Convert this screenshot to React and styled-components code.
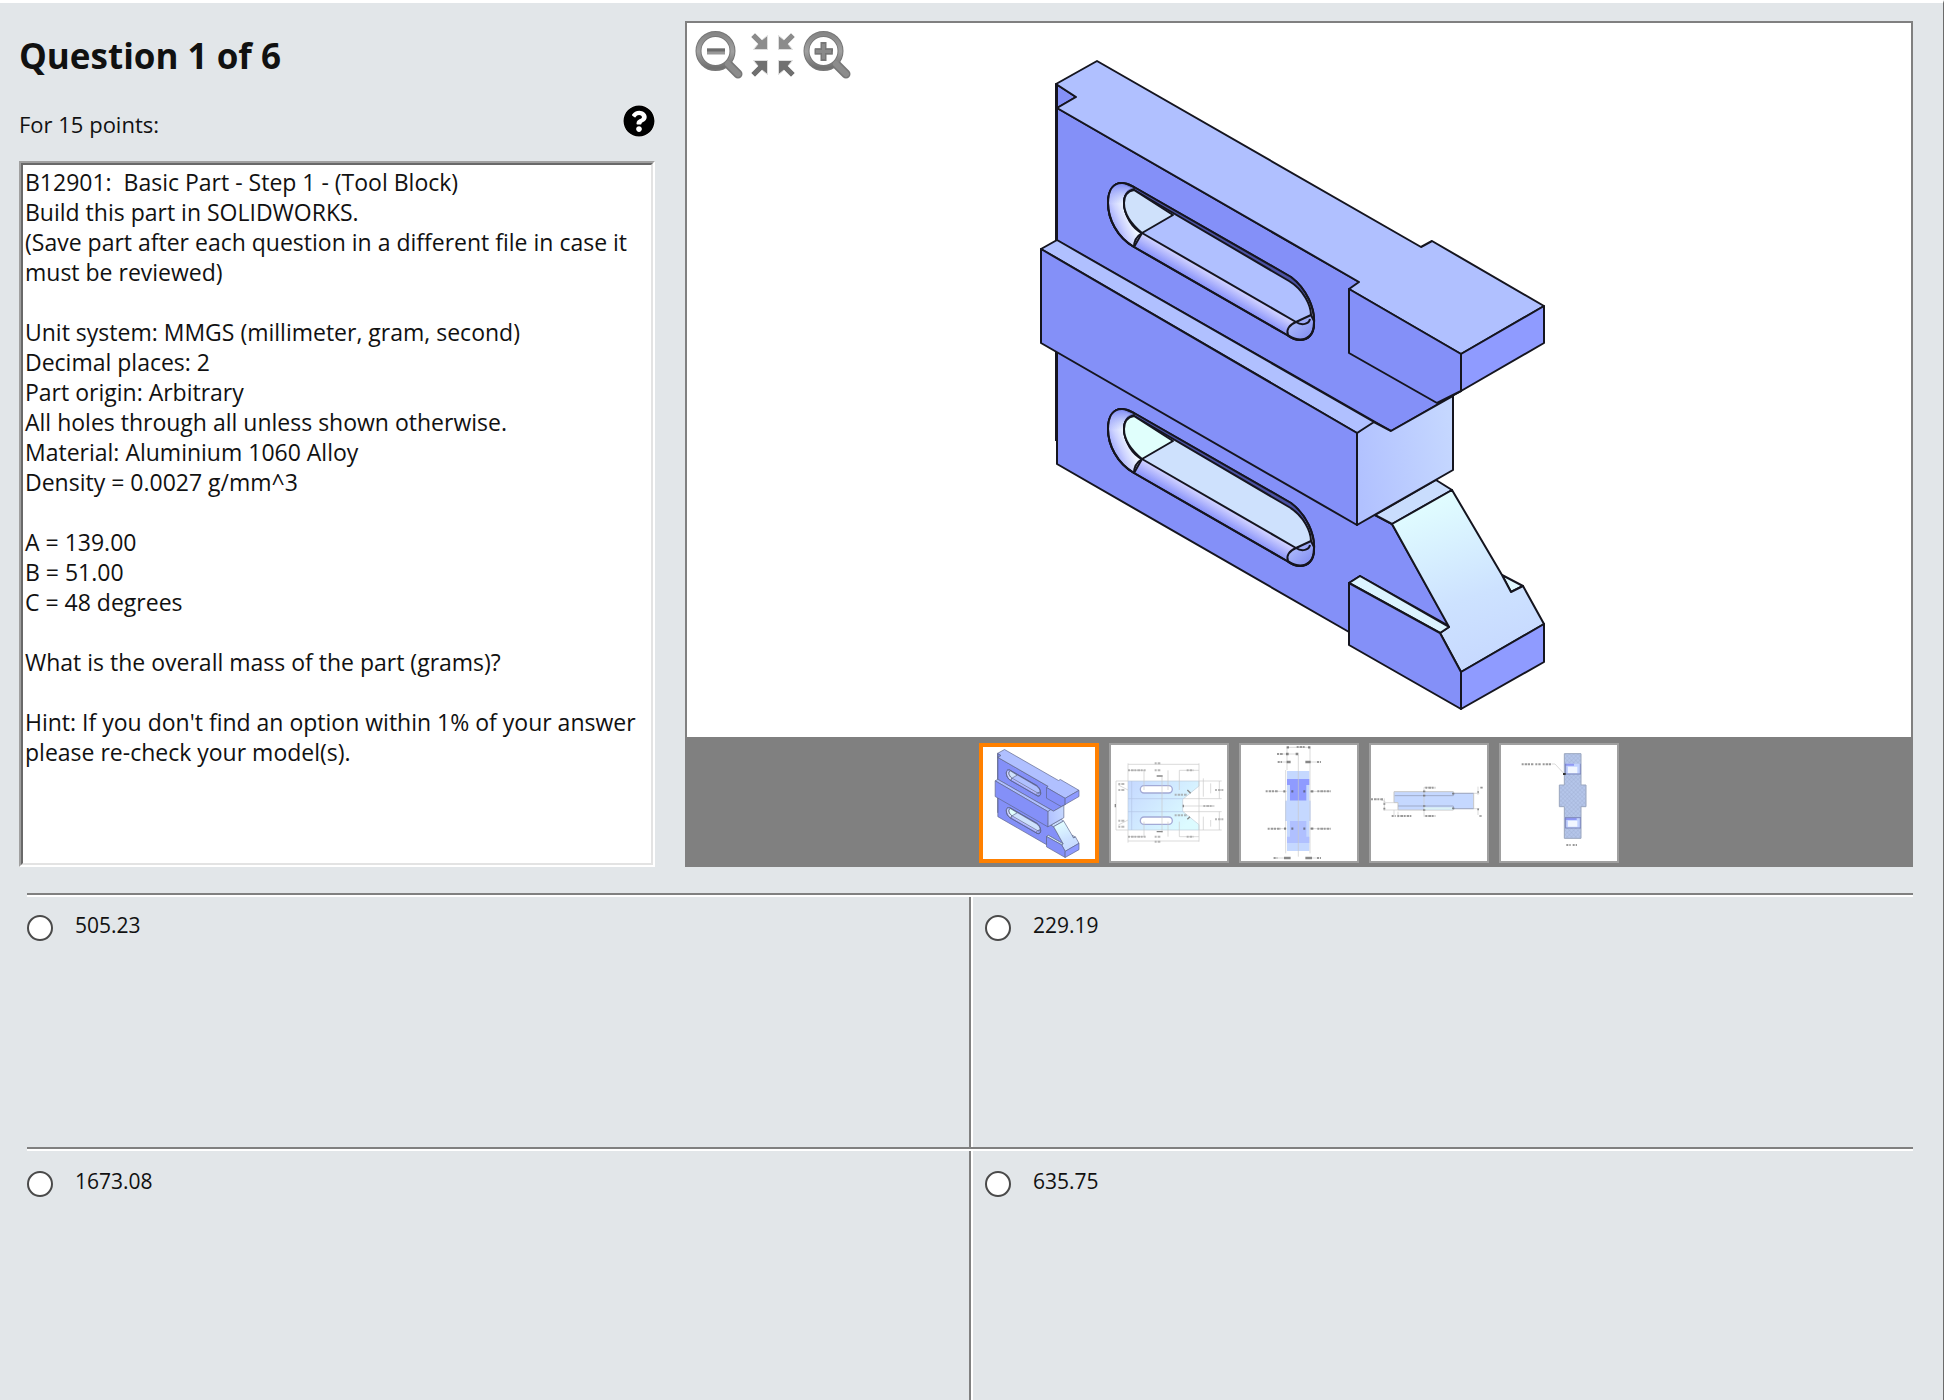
import React, { useState } from "react";
import styled, { createGlobalStyle } from "styled-components";
import { FaQuestionCircle } from "react-icons/fa";

const GlobalStyle = createGlobalStyle`
  *, *::before, *::after { box-sizing: border-box; }
  body {
    margin: 0;
    background: #e2e6e9;
    color: #111;
    font-family: "Open Sans", "Noto Sans", sans-serif;
    font-size: 23px;
    line-height: 30px;
  }
`;

const Page = styled.main`
  min-height: 100vh;
  display: flex;
  flex-direction: column;
  padding: 18px 30px 0 19px;
  border-top: 3px solid #fff;
  border-right: 1px solid #6b6b6b;
`;

const Question = styled.section`
  display: grid;
  grid-template-columns: 636px minmax(0, 1fr);
  gap: 30px;
`;

const Prompt = styled.div`
  display: flex;
  flex-direction: column;
  padding-top: 11px;
`;

const Title = styled.h1`
  margin: 0 0 25px;
  font-size: 35px;
  line-height: 48px;
  font-weight: 700;
`;

const PointsRow = styled.div`
  display: flex;
  justify-content: space-between;
  align-items: flex-end;
  height: 34px;
  margin-bottom: 22px;
  font-size: 22px;
`;

const HelpButton = styled.button`
  align-self: flex-start;
  width: 32px;
  height: 32px;
  padding: 0;
  border: 0;
  border-radius: 50%;
  background: #fff;
  color: #000;
  cursor: pointer;
  svg { display: block; width: 32px; height: 32px; }
`;

const PromptFrame = styled.div`
  flex: 1;
  display: flex;
  border: 2px solid;
  border-color: #a0a0a0 #fff #fff #a0a0a0;
`;

const PromptText = styled.textarea`
  flex: 1;
  margin: 0;
  padding: 2px 0 0 2px;
  border: 2px solid;
  border-color: #696969 #e3e3e3 #e3e3e3 #696969;
  border-radius: 0;
  outline: 0;
  resize: none;
  overflow: auto;
  background: #fff;
  color: inherit;
  font: inherit;
`;

const Viewer = styled.div`
  display: flex;
  flex-direction: column;
  border: 2px solid #808080;
  background: #fff;
`;

const Stage = styled.div`
  display: grid;
`;

const StageDrawing = styled.svg`
  grid-area: 1 / 1;
  display: block;
  width: 100%;
  aspect-ratio: 1224 / 714;
`;

const Tools = styled.div`
  grid-area: 1 / 1;
  place-self: start;
  z-index: 1;
  display: flex;
  gap: 6px;
  padding: 8px;
`;

const ToolButton = styled.button`
  width: 48px;
  height: 48px;
  padding: 0;
  border: 0;
  background: none;
  cursor: pointer;
  svg { display: block; }
`;

const Strip = styled.div`
  display: flex;
  justify-content: center;
  gap: 10px;
  padding: 6px 0 2px;
  background: #808080;
`;

const Thumb = styled.button`
  width: 120px;
  height: 120px;
  padding: 0;
  border: ${(p) => (p.$active ? "4px solid #ff8000" : "2px solid #a0a0a0")};
  background: #fff;
  cursor: pointer;
  svg { display: block; width: 100%; height: 100%; }
`;

const Answers = styled.section`
  flex: 1;
  display: grid;
  grid-template-rows: minmax(254px, auto) 1fr;
  margin: 26px 0 0 8px;
`;

const AnswerRow = styled.div`
  display: grid;
  grid-template-columns: calc(50% - 1px) 1fr;
  padding-top: 2px;
  border-top: 2px solid #808080;
  box-shadow: inset 0 2px #fff;
  & + & > label { padding-top: 20px; }
`;

const Answer = styled.label`
  display: flex;
  align-items: flex-start;
  gap: 22px;
  padding-top: 18px;
  & + & {
    padding-left: 14px;
    border-left: 2px solid #808080;
    box-shadow: inset 2px 0 #fff;
  }
`;

const Radio = styled.input`
  appearance: none;
  flex: none;
  width: 26px;
  height: 26px;
  margin: 0;
  border: 2px solid #4a4a4a;
  border-radius: 50%;
  background: #fff;
  &:checked { box-shadow: inset 0 0 0 5px #fff; background: #222; }
`;

const AnswerText = styled.span`
  font-size: 21px;
  line-height: 20px;
`;

const PROMPT = `B12901:  Basic Part - Step 1 - (Tool Block)
Build this part in SOLIDWORKS.
(Save part after each question in a different file in case it must be reviewed)

Unit system: MMGS (millimeter, gram, second)
Decimal places: 2
Part origin: Arbitrary
All holes through all unless shown otherwise.
Material: Aluminium 1060 Alloy
Density = 0.0027 g/mm^3

A = 139.00
B = 51.00
C = 48 degrees

What is the overall mass of the part (grams)?

Hint: If you don't find an option within 1% of your answer please re-check your model(s).`;

const ANSWERS = [
  ["505.23", "229.19"],
  ["1673.08", "635.75"],
];

function Magnifier({ plus, id }) {
  return (
    <svg width="48" height="48" viewBox="0 0 48 48" fill="none">
      <defs>
        <linearGradient id={id} gradientUnits="userSpaceOnUse" x1="0" y1="0" x2="0" y2="46">
          <stop offset="0" stopColor="#828282" />
          <stop offset="0.45" stopColor="#a0a0a0" />
          <stop offset="0.8" stopColor="#707070" />
          <stop offset="1" stopColor="#8c8c8c" />
        </linearGradient>
      </defs>
      <circle cx="20.5" cy="20" r="17" stroke="#777" strokeWidth="6" />
      <path d="M34 34L43 43" stroke="#777" strokeWidth="9" strokeLinecap="round" />
      <circle cx="20.5" cy="20" r="17" stroke={`url(#${id})`} strokeWidth="4" />
      <path d="M33 33L43 43" stroke="#8c8c8c" strokeWidth="6" strokeLinecap="round" />
      <path d="M12 17.5h18v6h-18z" fill="#999" />
      <path d="M12 17.5h18v3h-18z" fill="#6c6c6c" />
      {plus && <path d="M17.5 11h6v6.500h6v6h-6v6.500h-6v-6.500h-6v-6h6z" fill="#777" />}
      {plus && <path d="M19 13h3v6h6v3h-6v6h-3v-6h-6v-3h6z" fill="#8a8a8a" />}
    </svg>
  );
}

function FitArrows() {
  const arrow = "M2 6L6 2L13 9L18.500 4.500V18.500H4.500L9 13Z";
  return (
    <svg width="48" height="48" viewBox="0 0 48 48">
      <g stroke="#dedede" strokeWidth="1">
        <path d={arrow} fill="#8c8c8c" />
        <path d={arrow} fill="#8c8c8c" transform="matrix(-1 0 0 1 48 0)" />
        <path d={arrow} fill="#707070" transform="matrix(1 0 0 -1 0 48)" />
        <path d={arrow} fill="#707070" transform="matrix(-1 0 0 -1 48 48)" />
      </g>
    </svg>
  );
}

function Slot({ id, floor, end }) {
  const outer =
    "M1108 203C1108 189 1114 183 1122 183C1127 183 1130 185 1134 187L1291 277C1307 289 1315 309 1314 323C1314 335 1307 340 1300 340C1295 340 1291 338 1287 335L1134 247C1117 237 1108 219 1108 203Z";
  return (
    <g>
      <path d={outer} fill={`url(#${id}wall)`} />
      <path d="M1134 187L1291 277C1300 284 1308 296 1311 311C1306 298 1297 286 1288 280L1133 190Z" fill="#4b51a4" stroke="none" />
      <path d="M1108 203C1108 189 1114 183 1122 183L1134 188C1127 190 1124 196 1124 204C1125 216 1132 228 1142 233L1134 247C1117 237 1108 219 1108 203Z" fill={`url(#${id}round)`} />
      <path d="M1108 203C1108 189 1114 183 1122 183L1134 188C1127 190 1124 196 1124 204Z" fill={`url(#${id}crown)`} stroke="none" />
      <path d="M1124 203C1124 195 1128 191 1134 190L1289 281C1304 290 1311 306 1311 315C1311 321 1307 325 1296 322L1142 233C1131 224 1124 213 1124 203Z" fill={floor} />
      <path d="M1124 203C1124 195 1128 191 1134 190L1173 215L1142 233C1131 224 1124 213 1124 203Z" fill={end} />
      <path d="M1296 322C1289 325 1286 330 1288 335C1300 343 1315 341 1314 321L1311 315Z" fill={`url(#${id}cup)`} />
      <path d={outer} fill="none" />
      <path d="M1142 233C1137 236 1134 241 1134 247M1296 322C1302 326 1309 324 1310 319" fill="none" />
    </g>
  );
}

function Part({ id, stroke = "#15151f", strokeWidth = 2 }) {
  return (
    <g stroke={stroke} strokeWidth={strokeWidth} strokeLinejoin="round">
      <defs>
        <linearGradient id={`${id}side`} x1="0" y1="0.6" x2="1" y2="0.4">
          <stop offset="0" stopColor="#b1c1ff" />
          <stop offset="1" stopColor="#c5d7ff" />
        </linearGradient>
        <linearGradient id={`${id}slant`} x1="0.3" y1="0" x2="0.6" y2="1">
          <stop offset="0" stopColor="#e2ffff" />
          <stop offset="0.6" stopColor="#cde2ff" />
          <stop offset="1" stopColor="#c6d8ff" />
        </linearGradient>
        <linearGradient id={`${id}wall`} gradientUnits="userSpaceOnUse" x1="1218" y1="279" x2="1211" y2="291">
          <stop offset="0" stopColor="#ccceff" />
          <stop offset="1" stopColor="#8892fa" />
        </linearGradient>
        <linearGradient id={`${id}round`} gradientUnits="userSpaceOnUse" x1="1111" y1="226" x2="1131" y2="217">
          <stop offset="0" stopColor="#959efc" />
          <stop offset="0.5" stopColor="#ccd2ff" />
          <stop offset="1" stopColor="#f4fbff" />
        </linearGradient>
        <linearGradient id={`${id}crown`} gradientUnits="userSpaceOnUse" x1="1117" y1="184" x2="1117" y2="204">
          <stop offset="0" stopColor="#8490f8" />
          <stop offset="1" stopColor="#8490f8" stopOpacity="0" />
        </linearGradient>
        <linearGradient id={`${id}cup`} x1="0" y1="0" x2="1" y2="1">
          <stop offset="0" stopColor="#b9c8ff" />
          <stop offset="1" stopColor="#7d88f0" />
        </linearGradient>
      </defs>
      {/* lower plate */}
      <path d="M1057 340V464L1349 632V583L1360 576L1449 626L1392 524L1375 515L1350 500Z" fill="#8490f8" />
      <g transform="translate(0 226)">
        <Slot id={id} floor="#cee1fd" end="#e0fffc" />
      </g>
      {/* lower foot */}
      <path d="M1375 515L1436 480L1452 490L1392 524Z" fill="#c9ddfd" />
      <path d="M1502 575L1523 586L1511 592Z" fill="#e0f8ff" />
      <path d="M1392 524L1452 490L1502 575L1511 592L1523 586L1544 624L1461 672L1440 633L1449 627Z" fill={`url(#${id}slant)`} />
      <path d="M1349 583L1360 576L1449 627L1440 633Z" fill="#dbf3ff" />
      <path d="M1349 583L1440 633L1461 672V709L1349 645Z" fill="#8490f8" />
      <path d="M1461 672L1544 624V662L1461 709Z" fill="#8f9bff" />
      {/* upper plate */}
      <path d="M1056 84V240L1391 431L1461 391L1359 282L1057 108L1076 97Z" fill="#8490f8" />
      <path d="M1097 61L1056 84L1076 97L1057 108L1359 282L1349 289L1461 354L1544 306L1432 241L1421 247Z" fill="#b0c0ff" />
      <Slot id={id} floor="#b0c0ff" end="#cfe1fb" />
      <path d="M1349 289V353L1437 403L1461 391V354Z" fill="#8490f8" />
      <path d="M1461 354L1544 306V343L1461 391Z" fill="#8f9bff" />
      {/* centre rail */}
      <path d="M1357 433L1372 421L1391 431L1453 396V470L1357 525Z" fill={`url(#${id}side)`} />
      <path d="M1057 240L1041 249L1357 433L1374 422Z" fill="#b0c0ff" />
      <path d="M1041 249V343L1357 525V433Z" fill="#8490f8" />
      <path d="M1056.500 84V240M1056.500 352V441" fill="none" strokeWidth={strokeWidth + 1} />
    </g>
  );
}

const Note = styled.path.attrs({ fill: "none" })`
  stroke: #9a9a9a;
  stroke-width: 6;
  stroke-dasharray: 6 3 8 2;
`;

const Dim = styled.path.attrs({ fill: "none" })`
  stroke: #c9c9c9;
  stroke-width: 2;
`;

function FrontView() {
  return (
    <svg viewBox="423 45 348 348" aria-hidden="true">
      <defs>
        <linearGradient id="frontFill" x1="0" y1="0" x2="1" y2="0.6">
          <stop offset="0" stopColor="#c5d8ff" />
          <stop offset="1" stopColor="#dcfbff" />
        </linearGradient>
      </defs>
      <path d="M474 153H687V168L638 208V244L687 284V300H474Z" fill="url(#frontFill)" stroke="#c0cbd8" strokeWidth="2" />
      <path d="M474 206H640M474 245H640M485 153V300" stroke="#b3c6e5" strokeWidth="2" />
      <g fill="#fff" stroke="#a3aad6" strokeWidth="4">
        <rect x="511" y="167" width="96" height="22" rx="11" />
        <rect x="511" y="261" width="96" height="22" rx="11" />
      </g>
      <Dim d="M474 100V153M474 103H687M687 100V335M474 300V338M474 333H687M474 121H522V180M594 121V180M628 180V121H687M474 320H522V275M594 320V275M628 275V320H687M576 140V308M438 153H474M438 153V300H474M445 165L474 180M445 285L474 270M640 206H755M640 245H755M687 153H755M687 300H755M748 153V206M748 245V300M700 145V200M722 160V190M700 260V300M722 270V290M640 228H735" />
      <Note d="M474 121H527M554 100H572M554 121H572M650 121H670M474 320H527M554 320H572M554 335H572M650 320H670M445 162H465M445 180H465M445 272H465M445 290H465M700 228H730M735 180H762M735 268H762M614 194H650M614 256H650" opacity="0.7" />
      <path d="M652 180l10 10M652 268l8 -8M560 138h18M560 305h18M640 224v8M436 222v10" stroke="#888" strokeWidth="4" />
    </svg>
  );
}

function EndView() {
  return (
    <svg viewBox="813 45 348 348" aria-hidden="true">
      <path d="M951 123H1018V363H951Z" fill="#c5d8ff" />
      <path d="M951 147H1018V165H1009V212H960V165H951Z" fill="#8f9bff" />
      <path d="M960 273H1009V320H1018V339H951V320H960Z" fill="#b0c0ff" />
      <path d="M945 212H1022V273H945Z" fill="#c5d8ff" />
      <Dim d="M985 75V380M951 50V120M1020 50V370M951 52H1020M925 72H985M925 96H960M1008 96H1050M910 184H950M1020 184H1080M910 296H950M1020 296H1080M910 384H960M1008 384H1050M947 120V370" />
      <Note d="M980 51H1004M921 72H938M923 96H936M1041 96H1053M887 184H925M1042 184H1082M893 296H932M1042 296H1082M911 384H922M1041 384H1053" />
      <path d="M950 52h7M1014 52h7M948 72h8M977 72h8M950 96h12M1006 96h16M940 184h6M964 184h6M1000 184h6M1022 184h8M942 296h6M964 296h6M1000 296h6M1022 296h8M942 384h20M1006 384h20" stroke="#444" strokeWidth="7" opacity="0.6" />
    </svg>
  );
}

function SideView() {
  return (
    <svg viewBox="213 45 348 348" aria-hidden="true">
      <path d="M282 185H460V190H521V236H460V240H294V218H282Z" fill="#c5d8ff" stroke="#c6c6c6" strokeWidth="3" />
      <path d="M372 232H460V239H372Z" fill="#dcf2f5" />
      <path d="M284 197H460V190H521M294 228H460V236H521" fill="none" stroke="#9fabc9" strokeWidth="3" />
      <Dim d="M372 172V260M250 218H282M250 240H294M253 205V242M282 240V255M294 245V262M521 190H538M521 236H538M534 170V195M534 236V255M372 172H400M372 258H400M240 208L256 215" />
      <Note d="M213 208H249M376 173H406M376 258H406M275 258H287M292 258H334" />
      <path d="M369 184h7M369 197h7M369 228h7M369 240h7M456 191h7M456 235h7M250 222h6M250 236h6M532 186h5M532 238h5M541 173h7M538 258h7" stroke="#666" strokeWidth="5" opacity="0.7" />
    </svg>
  );
}

function SectionView() {
  return (
    <svg viewBox="603 45 348 348" aria-hidden="true">
      <defs>
        <pattern id="hatch" width="9" height="9" patternUnits="userSpaceOnUse" patternTransform="rotate(45)">
          <rect width="9" height="9" fill="#b5c6ea" />
          <path d="M0 0H9M0 0V9" stroke="#9baacf" strokeWidth="2" />
        </pattern>
      </defs>
      <path d="M793 71H843V165H858V230H843V325H793V230H778V165H793Z" fill="url(#hatch)" stroke="#9aa6bf" strokeWidth="3" />
      <path d="M796 101H843V132H796ZM796 263H843V294H796Z" fill="#c2d2ff" />
      <path d="M804 110H832V130H804ZM804 272H832V290H804Z" fill="#f1f6ff" />
      <path d="M794 104H822M794 267H830" stroke="#8f98f5" strokeWidth="6" />
      <path d="M795 132H843M795 263H843M797 101V132M797 263V294M841 101V132M841 263V294M795 294H843" stroke="#7d87bb" strokeWidth="3" />
      <Dim d="M755 102H765L792 131" />
      <Note d="M665 103H700M706 103H722M728 103H755M799 345H812M818 345H831" />
      <path d="M789 129h8v6h-8z" fill="#333" />
    </svg>
  );
}

const THUMBS = [
  { name: "Isometric view", draw: <svg viewBox="968 46 672 672" aria-hidden="true"><Part id="mini" stroke="#5c6388" strokeWidth={4} /></svg> },
  { name: "Front view", draw: <FrontView /> },
  { name: "End view", draw: <EndView /> },
  { name: "Side view", draw: <SideView /> },
  { name: "Section view", draw: <SectionView /> },
];

export default function App() {
  const [view, setView] = useState(0);
  const [answer, setAnswer] = useState(null);
  return (
    <>
      <GlobalStyle />
      <Page>
        <Question>
          <Prompt>
            <Title>Question 1 of 6</Title>
            <PointsRow>
              <label htmlFor="prompt">For 15 points:</label>
              <HelpButton type="button" aria-label="Help"><FaQuestionCircle /></HelpButton>
            </PointsRow>
            <PromptFrame>
              <PromptText id="prompt" readOnly spellCheck={false} value={PROMPT} />
            </PromptFrame>
          </Prompt>
          <Viewer>
            <Stage>
              <Tools>
                <ToolButton type="button" aria-label="Zoom out"><Magnifier id="lensOut" /></ToolButton>
                <ToolButton type="button" aria-label="Fit to view"><FitArrows /></ToolButton>
                <ToolButton type="button" aria-label="Zoom in"><Magnifier id="lensIn" plus /></ToolButton>
              </Tools>
              <StageDrawing viewBox="687 23 1224 714" role="img" aria-label="Tool block">
                <Part id="main" />
              </StageDrawing>
            </Stage>
            <Strip>
              {THUMBS.map((t, i) => (
                <Thumb key={t.name} type="button" aria-label={t.name} $active={view === i} onClick={() => setView(i)}>
                  {t.draw}
                </Thumb>
              ))}
            </Strip>
          </Viewer>
        </Question>
        <Answers role="radiogroup" aria-label="Answers">
          {ANSWERS.map((row) => (
            <AnswerRow key={row[0]}>
              {row.map((value) => (
                <Answer key={value}>
                  <Radio type="radio" name="answer" value={value} checked={answer === value} onChange={() => setAnswer(value)} />
                  <AnswerText>{value}</AnswerText>
                </Answer>
              ))}
            </AnswerRow>
          ))}
        </Answers>
      </Page>
    </>
  );
}
